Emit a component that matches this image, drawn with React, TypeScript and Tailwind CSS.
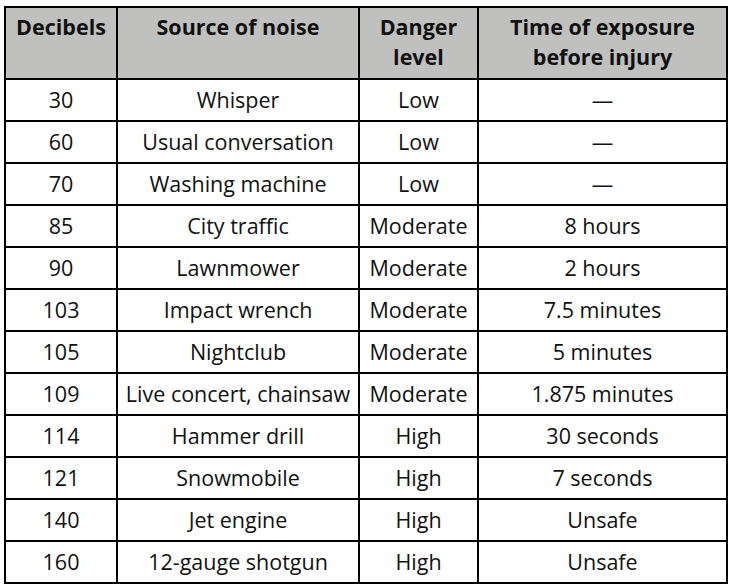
const rows: [string, string, string, string][] = [
  ['30', 'Whisper', 'Low', '—'],
  ['60', 'Usual conversation', 'Low', '—'],
  ['70', 'Washing machine', 'Low', '—'],
  ['85', 'City traffic', 'Moderate', '8 hours'],
  ['90', 'Lawnmower', 'Moderate', '2 hours'],
  ['103', 'Impact wrench', 'Moderate', '7.5 minutes'],
  ['105', 'Nightclub', 'Moderate', '5 minutes'],
  ['109', 'Live concert, chainsaw', 'Moderate', '1.875 minutes'],
  ['114', 'Hammer drill', 'High', '30 seconds'],
  ['121', 'Snowmobile', 'High', '7 seconds'],
  ['140', 'Jet engine', 'High', 'Unsafe'],
  ['160', '12-gauge shotgun', 'High', 'Unsafe'],
]

const headers = ['Decibels', 'Source of noise', 'Danger\nlevel', 'Time of exposure\nbefore injury']

export default function App() {
  return (
    <div className="w-[730px] h-[588px] bg-white pt-[6px] pl-[4px] font-['Open_Sans',sans-serif] text-[21.5px] text-[#111]">
      <table className="border-collapse table-fixed w-[722px]">
        <colgroup>
          <col className="w-[112px]" />
          <col className="w-[242px]" />
          <col className="w-[119px]" />
          <col className="w-[249px]" />
        </colgroup>
        <thead>
          <tr className="h-[72px] bg-[#c0c1bf]">
            {headers.map(h => (
              <th
                key={h}
                className="border-2 border-black align-top pt-[4px] font-bold leading-[30px] whitespace-pre-line text-center"
              >
                {h}
              </th>
            ))}
          </tr>
        </thead>
        <tbody>
          {rows.map(r => (
            <tr key={r[0]} className="h-[42px]">
              {r.map((c, i) => (
                <td key={i} className="border-2 border-black text-center align-middle p-0 leading-[28px]">
                  {c}
                </td>
              ))}
            </tr>
          ))}
        </tbody>
      </table>
    </div>
  )
}
